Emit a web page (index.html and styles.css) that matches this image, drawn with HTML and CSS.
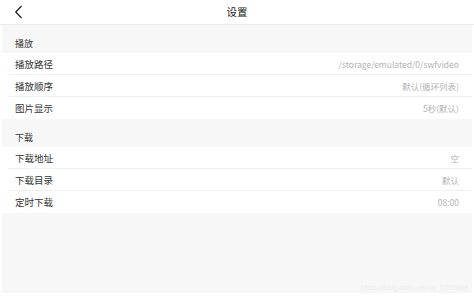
FILE: index.html
```html
<!DOCTYPE html>
<html lang="zh">
<head>
<meta charset="utf-8">
<link rel="stylesheet" href="styles.css">
</head>
<body>
<div class="app">
  <header class="topbar">
    <span class="back">
      <svg width="9" height="14" viewBox="0 0 9 14"><path d="M7.5 1 L1.8 7 L7.5 13" fill="none" stroke="#222" stroke-width="1.3"/></svg>
    </span>
    <span class="title">设置</span>
  </header>
  <main class="content">
    <div class="section-title">播放</div>
    <div class="group">
      <div class="row"><span class="label">播放路径</span><span class="value">/storage/emulated/0/swfvideo</span></div>
      <div class="row"><span class="label">播放顺序</span><span class="value">默认(循环列表)</span></div>
      <div class="row last"><span class="label">图片显示</span><span class="value">5秒(默认)</span></div>
    </div>
    <div class="section-title">下载</div>
    <div class="group">
      <div class="row"><span class="label">下载地址</span><span class="value">空</span></div>
      <div class="row"><span class="label">下载目录</span><span class="value">默认</span></div>
      <div class="row last"><span class="label">定时下载</span><span class="value">08:00</span></div>
    </div>
    <div class="filler"><span class="watermark">https://blog.csdn.net/qq_37859869</span></div>
  </main>
</div>
</body>
</html>
```
FILE: styles.css
```css
* { box-sizing: border-box; }
html, body { margin: 0; padding: 0; background: #ffffff; }
body {
  font-family: "Noto Sans CJK SC", "Noto Sans", sans-serif;
  width: 474px;
  height: 296px;
  overflow: hidden;
}
.app { display: flex; flex-direction: column; height: 296px; }
.topbar {
  height: 25px;
  flex: none;
  display: flex;
  align-items: center;
  justify-content: center;
  position: relative;
  background: #fff;
  border-bottom: 1px solid #ececec;
}
.back { position: absolute; left: 14px; top: 5px; display: flex; }
.title { font-size: 10.5px; color: #222; line-height: 1; }
.content {
  flex: 1;
  display: flex;
  flex-direction: column;
  background: #f7f7f7;
  margin: 0 2px 3px 2px;
}
.section-title {
  height: 28px;
  flex: none;
  display: flex;
  align-items: flex-end;
  padding: 0 0 3px 13px;
  font-size: 9px;
  color: #333;
  line-height: 12px;
}
.group { background: #fff; flex: none; }
.row {
  height: 22px;
  display: flex;
  align-items: center;
  justify-content: space-between;
  margin-left: 6px;
  padding: 0 13px 0 7px;
  border-bottom: 1px solid #f0f0f0;
}
.row.last { border-bottom: none; }
.label { font-size: 9.5px; color: #333; }
.value { font-size: 8.5px; color: #b3b3b3; }
.filler {
  flex: 1;
  display: flex;
  align-items: flex-end;
  justify-content: flex-end;
  padding: 0 4px 1px 0;
}
.watermark { font-size: 6.5px; color: #ececec; }
```
